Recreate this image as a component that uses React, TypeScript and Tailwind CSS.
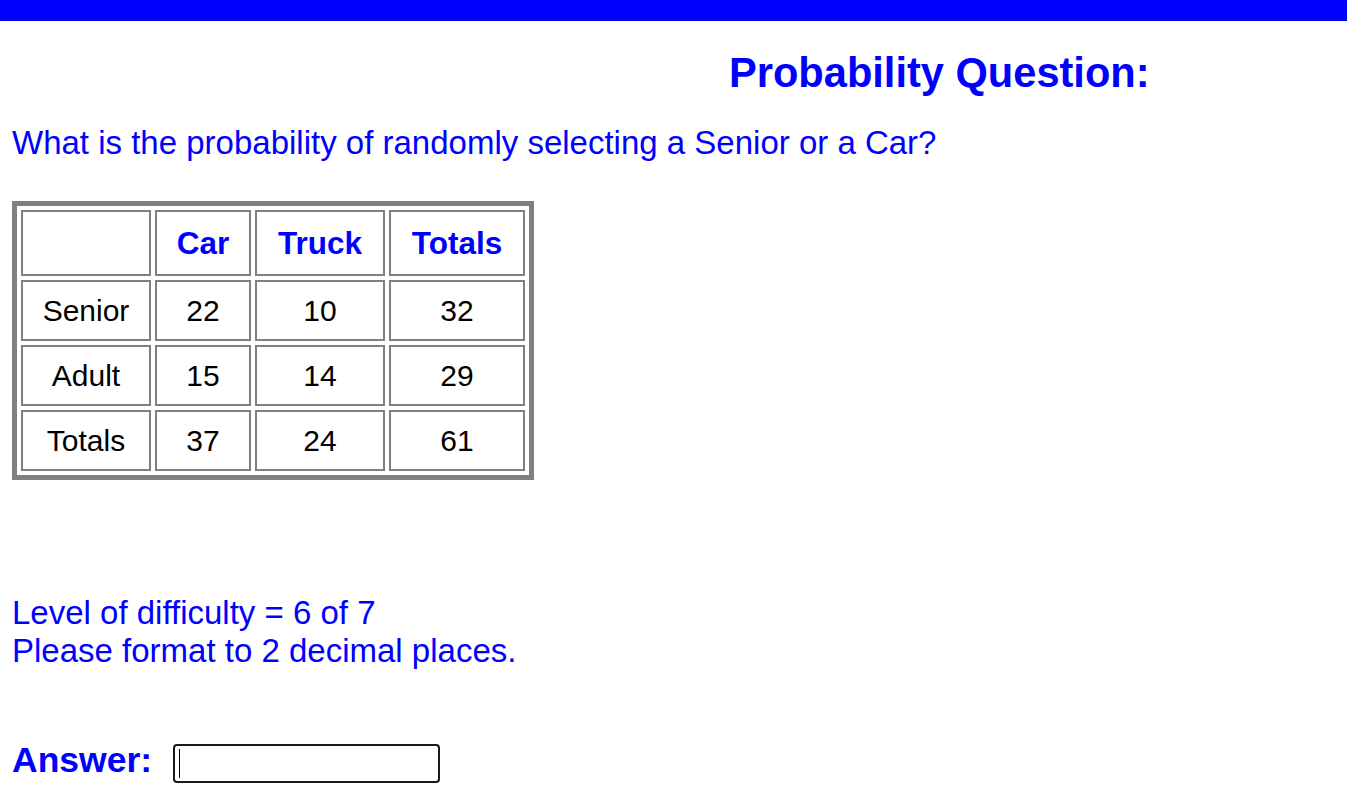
import React from "react";

const font = { fontFamily: '"Liberation Sans", Arial, sans-serif' };

export default function App() {
  const rows = [
    ["Senior", "22", "10", "32"],
    ["Adult", "15", "14", "29"],
    ["Totals", "37", "24", "61"],
  ];
  const widths = ["w-[130px]", "w-[96px]", "w-[130px]", "w-[136px]"];
  return (
    <div className="min-h-[805px] bg-white text-[#0000ff]" style={font}>
      <div className="h-[21px] bg-[#0000ff]" />
      <div className="pl-[729px] mt-[28px] text-[41.6px] font-bold leading-[48px]">Probability Question:</div>
      <div className="pl-[12px] mt-[27px] text-[33px] leading-[38px]">
        What is the probability of randomly selecting a Senior or a Car?
      </div>
      <div className="pl-[12px] mt-[39px]">
        <table className="border-separate border-spacing-x-[4px] border-spacing-y-[4px] border-[5px] border-[#808080]">
          <tbody>
            <tr>
              {["", "Car", "Truck", "Totals"].map((h, i) => (
                <td
                  key={i}
                  className={`${widths[i]} h-[66px] border-2 border-[#808080] text-center align-middle text-[31.5px] font-bold text-[#0000ff] p-0 leading-[36px]`}
                >
                  {h}
                </td>
              ))}
            </tr>
            {rows.map((r, ri) => (
              <tr key={ri}>
                {r.map((c, ci) => (
                  <td
                    key={ci}
                    className={`${widths[ci]} h-[61px] border-2 border-[#808080] text-center align-middle text-[30px] text-black p-0 leading-[35px]`}
                  >
                    {c}
                  </td>
                ))}
              </tr>
            ))}
          </tbody>
        </table>
      </div>
      <div className="pl-[12px] mt-[114px] text-[33px] leading-[38px]">
        <div>Level of difficulty = 6 of 7</div>
        <div>Please format to 2 decimal places.</div>
      </div>
      <div className="pl-[12px] mt-[70px] flex items-start">
        <div className="text-[35.5px] font-bold leading-[40px]">Answer:</div>
        <div className="ml-[21px] mt-[4px] w-[267px] h-[39px] border-2 border-[#1a1a1a] rounded-[4px] bg-white flex items-center pl-[4px]">
          <div className="w-px h-[29px] bg-black" />
        </div>
      </div>
    </div>
  );
}
